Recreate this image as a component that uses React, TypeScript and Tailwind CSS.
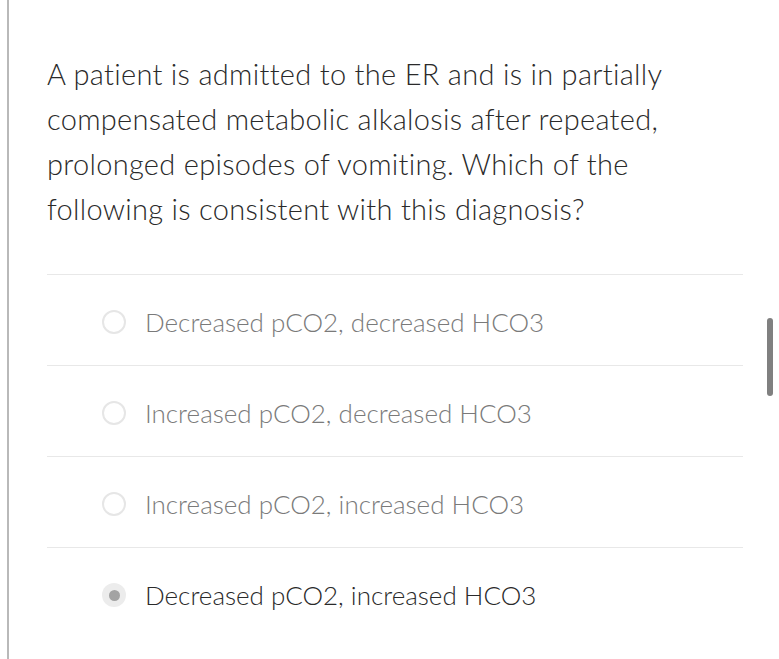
import React from "react";

const options = [
  { text: "Decreased pCO2, decreased HCO3", selected: false },
  { text: "Increased pCO2, decreased HCO3", selected: false },
  { text: "Increased pCO2, increased HCO3", selected: false },
  { text: "Decreased pCO2, increased HCO3", selected: true },
];

const lines = [
  "A patient is admitted to the ER and is in partially",
  "compensated metabolic alkalosis after repeated,",
  "prolonged episodes of vomiting. Which of the",
  "following is consistent with this diagnosis?",
];

export default function App() {
  return (
    <div className="relative w-[779px] h-[659px] bg-white overflow-hidden" style={{ fontFamily: "Lato, 'Open Sans', sans-serif" }}>
      <div className="flex h-full">
        <div className="w-[7px] shrink-0" />
        <div className="w-[2px] shrink-0 bg-[#b9b9b9]" />
        <div className="flex-1 pl-[38px] pr-[36px] pt-[51px]">
          <p className="text-[29px] leading-[45px] tracking-[0.3px] text-[#2a2a2a] font-light whitespace-nowrap">
            {lines.map((l, i) => (
              <span key={i} className="block">{l}</span>
            ))}
          </p>
          <div className="mt-[43px]">
            {options.map((o, i) => (
              <div key={i} className="border-t border-[#e8e8e8] h-[91px] flex items-center pt-[4px] pl-[55px]">
                {o.selected ? (
                  <div className="w-[24px] h-[24px] rounded-full bg-[#ececec] flex items-center justify-center">
                    <div className="w-[11px] h-[11px] rounded-full bg-[#a3a3a3]" />
                  </div>
                ) : (
                  <div className="w-[24px] h-[24px] rounded-full border-2 border-[#e6e6e6]" />
                )}
                <span className={"ml-[19px] text-[26px] font-light " + (o.selected ? "text-[#2a2a2a]" : "text-[#7a7a7a]")}>
                  {o.text}
                </span>
              </div>
            ))}
          </div>
        </div>
      </div>
      <div className="absolute left-[767px] top-[318px] w-[6px] h-[78px] rounded-full bg-[#808080]" />
    </div>
  );
}
